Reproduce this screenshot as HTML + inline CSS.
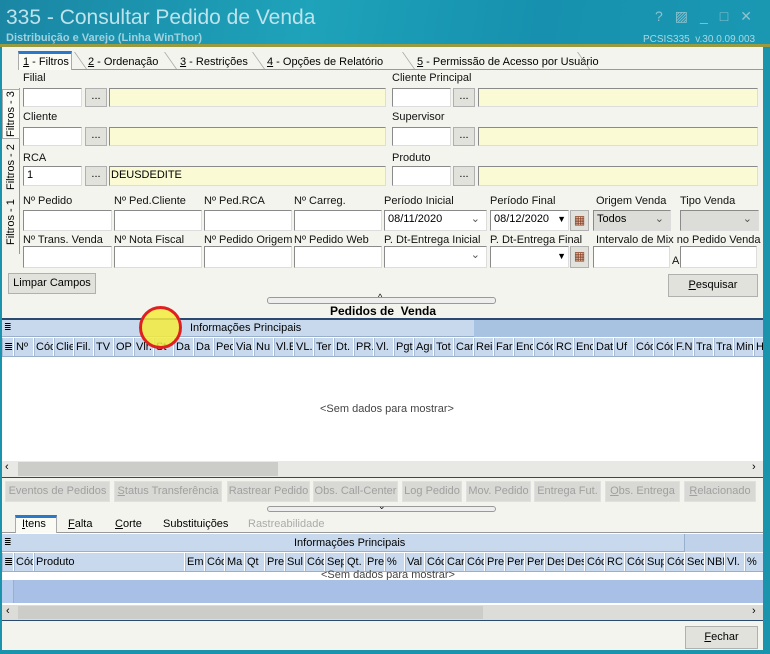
<!DOCTYPE html>
<html><head><meta charset="utf-8"><style>
*{box-sizing:border-box;margin:0;padding:0}
body{width:770px;height:654px;overflow:hidden;background:#1a93ad;font-family:"Liberation Sans",sans-serif;font-size:11px;color:#000;position:relative}
.a{position:absolute}
.lbl{position:absolute;font-size:11px;color:#111;white-space:nowrap}
.in{position:absolute;background:#fff;border:1px solid #8a8a8a;border-right-color:#ddd;border-bottom-color:#ddd;font-size:11px;padding:2px 3px;white-space:nowrap}
.y{background:#fafad4}
.bt{position:absolute;background:#e2e2dc;border:1px solid #b0b0b0;text-align:center;font-size:11px;line-height:18px}
.dis{color:#a0a0a0;background:#d8d8d4;border-color:#e0e0e0}
.gh{position:absolute;background:#c8d9ee;border-bottom:1px solid #98b0cc;display:flex;overflow:hidden;height:19px}
.gh span{flex:0 0 20px;border-right:1px solid #fff;border-left:1px solid #a8bcd6;padding-left:1px;font-size:11px;line-height:18px;overflow:hidden;white-space:nowrap}
.tab{position:absolute;font-size:11px;white-space:nowrap}
.tab u{text-decoration:underline}
.vt{position:absolute;left:3px;width:16px;writing-mode:vertical-rl;transform:rotate(180deg);font-size:11px;white-space:nowrap;text-align:center;line-height:16px}
</style></head><body>
<div class="a" style="left:0;top:0;width:770px;height:46px;background:linear-gradient(100deg,#1a86a4 0%,#1ea3ba 40%,#1690ae 70%,#1a98b2 100%)"></div>
<div class="a" style="left:6px;top:6px;font-size:21px;color:#bde3ec">335 - Consultar Pedido de Venda</div>
<div class="a" style="left:6px;top:32px;font-size:11px;font-weight:bold;color:#9fd2de">Distribuição e Varejo (Linha WinThor)</div>
<div class="a" style="left:655px;top:8px;font-size:14px;color:#8fc2cf;letter-spacing:12px">?▨_□✕</div>
<div class="a" style="left:643px;top:34px;font-size:10px;color:#a8d8e2">PCSIS335&nbsp; v.30.0.09.003</div>
<div class="a" style="left:0;top:44px;width:770px;height:3px;background:#9a9a40"></div>
<div class="a" style="left:2px;top:47px;width:761px;height:603px;background:#f4f4ee"></div>
<div class="a" style="left:18px;top:69px;width:745px;height:1px;background:#999"></div>
<div class="a" style="left:18px;top:51px;width:54px;height:19px;background:#fbfbf6;border:1px solid #aaa;border-bottom:none;border-top:3px solid #2a78c8"></div>
<div class="tab" style="left:23px;top:56px"><u>1</u> - Filtros</div>
<div class="tab" style="left:88px;top:56px"><u>2</u> - Ordenação</div>
<div class="tab" style="left:180px;top:56px"><u>3</u> - Restrições</div>
<div class="tab" style="left:267px;top:56px"><u>4</u> - Opções de Relatório</div>
<div class="tab" style="left:417px;top:56px"><u>5</u> - Permissão de Acesso por Usuário</div>
<div class="a" style="left:80px;top:52px;width:1px;height:17px;background:#aaa;transform:skewX(35deg)"></div>
<div class="a" style="left:170px;top:52px;width:1px;height:17px;background:#aaa;transform:skewX(35deg)"></div>
<div class="a" style="left:258px;top:52px;width:1px;height:17px;background:#aaa;transform:skewX(35deg)"></div>
<div class="a" style="left:408px;top:52px;width:1px;height:17px;background:#aaa;transform:skewX(35deg)"></div>
<div class="a" style="left:583px;top:52px;width:1px;height:17px;background:#aaa;transform:skewX(35deg)"></div>
<div class="a" style="left:2px;top:88px;width:18px;height:166px;border-right:1px solid #999"></div>
<div class="a" style="left:2px;top:89px;width:18px;height:50px;border:1px solid #aaa;background:#fbfbf6"></div>
<div class="vt" style="top:89px;height:50px">Filtros - 3</div>
<div class="vt" style="top:141px;height:52px">Filtros - 2</div>
<div class="vt" style="top:195px;height:55px">Filtros - 1</div>
<div class="lbl" style="left:23px;top:72px">Filial</div>
<div class="in" style="left:23px;top:88px;width:59px;height:19px"></div>
<div class="bt" style="left:85px;top:88px;width:22px;height:19px;line-height:14px">...</div>
<div class="in y" style="left:109px;top:88px;width:277px;height:19px"></div>
<div class="lbl" style="left:392px;top:72px">Cliente Principal</div>
<div class="in" style="left:392px;top:88px;width:59px;height:19px"></div>
<div class="bt" style="left:453px;top:88px;width:22px;height:19px;line-height:14px">...</div>
<div class="in y" style="left:478px;top:88px;width:280px;height:19px"></div>
<div class="lbl" style="left:23px;top:111px">Cliente</div>
<div class="in" style="left:23px;top:127px;width:59px;height:19px"></div>
<div class="bt" style="left:85px;top:127px;width:22px;height:19px;line-height:14px">...</div>
<div class="in y" style="left:109px;top:127px;width:277px;height:19px"></div>
<div class="lbl" style="left:392px;top:111px">Supervisor</div>
<div class="in" style="left:392px;top:127px;width:59px;height:19px"></div>
<div class="bt" style="left:453px;top:127px;width:22px;height:19px;line-height:14px">...</div>
<div class="in y" style="left:478px;top:127px;width:280px;height:19px"></div>
<div class="lbl" style="left:23px;top:152px">RCA</div>
<div class="in" style="left:23px;top:166px;width:59px;height:20px">1</div>
<div class="bt" style="left:85px;top:166px;width:22px;height:20px;line-height:15px">...</div>
<div class="in y" style="left:109px;top:166px;width:277px;height:20px;padding-left:1px">DEUSDEDITE</div>
<div class="lbl" style="left:392px;top:152px">Produto</div>
<div class="in" style="left:392px;top:166px;width:59px;height:20px"></div>
<div class="bt" style="left:453px;top:166px;width:22px;height:20px;line-height:15px">...</div>
<div class="in y" style="left:478px;top:166px;width:280px;height:20px"></div>
<div class="lbl" style="left:23px;top:195px">Nº Pedido</div>
<div class="lbl" style="left:114px;top:195px">Nº Ped.Cliente</div>
<div class="lbl" style="left:204px;top:195px">Nº Ped.RCA</div>
<div class="lbl" style="left:294px;top:195px">Nº Carreg.</div>
<div class="lbl" style="left:384px;top:195px">Período Inicial</div>
<div class="lbl" style="left:490px;top:195px">Período Final</div>
<div class="lbl" style="left:596px;top:195px">Origem Venda</div>
<div class="lbl" style="left:680px;top:195px">Tipo Venda</div>
<div class="in" style="left:23px;top:210px;width:89px;height:21px"></div>
<div class="in" style="left:114px;top:210px;width:88px;height:21px"></div>
<div class="in" style="left:204px;top:210px;width:88px;height:21px"></div>
<div class="in" style="left:294px;top:210px;width:88px;height:21px"></div>
<div class="in" style="left:384px;top:210px;width:103px;height:21px">08/11/2020<span style="position:absolute;right:6px;top:1px;color:#555">⌄</span></div>
<div class="in" style="left:490px;top:210px;width:79px;height:21px">08/12/2020<span style="position:absolute;right:2px;top:3px;font-size:9px">▼</span></div>
<div class="bt" style="left:570px;top:210px;width:19px;height:21px;color:#8b3a1a;font-size:12px">▦</div>
<div class="in" style="left:593px;top:210px;width:78px;height:21px;background:#dcdcd8">Todos<span style="position:absolute;right:6px;top:1px;color:#555">⌄</span></div>
<div class="in" style="left:680px;top:210px;width:79px;height:21px;background:#dcdcd8"><span style="position:absolute;right:6px;top:1px;color:#555">⌄</span></div>
<div class="lbl" style="left:23px;top:234px">Nº Trans. Venda</div>
<div class="lbl" style="left:114px;top:234px">Nº Nota Fiscal</div>
<div class="lbl" style="left:204px;top:234px">Nº Pedido Origem</div>
<div class="lbl" style="left:294px;top:234px">Nº Pedido Web</div>
<div class="lbl" style="left:384px;top:234px">P. Dt-Entrega Inicial</div>
<div class="lbl" style="left:490px;top:234px">P. Dt-Entrega Final</div>
<div class="lbl" style="left:596px;top:234px">Intervalo de Mix no Pedido Venda</div>
<div class="in" style="left:23px;top:246px;width:89px;height:22px"></div>
<div class="in" style="left:114px;top:246px;width:88px;height:22px"></div>
<div class="in" style="left:204px;top:246px;width:88px;height:22px"></div>
<div class="in" style="left:294px;top:246px;width:88px;height:22px"></div>
<div class="in" style="left:384px;top:246px;width:103px;height:22px"><span style="position:absolute;right:6px;top:1px;color:#555">⌄</span></div>
<div class="in" style="left:490px;top:246px;width:79px;height:22px"><span style="position:absolute;right:2px;top:4px;font-size:9px">▼</span></div>
<div class="bt" style="left:570px;top:246px;width:19px;height:22px;color:#8b3a1a;font-size:12px">▦</div>
<div class="in" style="left:593px;top:246px;width:77px;height:22px"></div>
<div class="lbl" style="left:672px;top:255px">A</div>
<div class="in" style="left:680px;top:246px;width:77px;height:22px"></div>
<div class="bt" style="left:8px;top:273px;width:88px;height:21px">Limpar Campos</div>
<div class="bt" style="left:668px;top:274px;width:90px;height:23px;line-height:21px"><u>P</u>esquisar</div>
<div class="a" style="left:267px;top:297px;width:229px;height:7px;border:1px solid #999;border-radius:3px;background:#eee"></div>
<div class="a" style="left:378px;top:292px;font-size:9px">^</div>
<div class="a" style="left:330px;top:304px;font-weight:bold;font-size:12px">Pedidos de&nbsp; Venda</div>
<div class="a" style="left:2px;top:318px;width:761px;height:160px;background:#fff;border-top:2px solid #2b4a70"></div>
<div class="a" style="left:2px;top:320px;width:761px;height:17px;background:#c8d9ee;border-bottom:1px solid #98b0cc"></div>
<div class="a" style="left:474px;top:320px;width:289px;height:17px;background:#a8c2e2"></div>
<div class="a" style="left:4px;top:322px;font-size:9px">≣</div>
<div class="a" style="left:190px;top:322px">Informações Principais</div>
<div class="gh" style="left:2px;top:338px;width:761px"><span style="flex-basis:12px">≣</span><span>Nº</span><span>Cód</span><span>Clie</span><span>Fil.</span><span>TV</span><span>OP</span><span>Vlr.</span><span>St</span><span>Da</span><span>Da</span><span>Pec</span><span>Via</span><span>Nu</span><span>Vl.E</span><span>VL.</span><span>Ter</span><span>Dt.</span><span>PR.</span><span>Vl.</span><span>Pgt</span><span>Agı</span><span>Tot</span><span>Car</span><span>Rei</span><span>Far</span><span>Enc</span><span>Cód</span><span>RC</span><span>Enc</span><span>Dat</span><span>Uf</span><span>Cód</span><span>Cód</span><span>F.N</span><span>Tra</span><span>Tra</span><span>Min</span><span>H</span></div>
<div class="a" style="left:320px;top:403px;color:#444">&lt;Sem dados para mostrar&gt;</div>
<div class="a" style="left:2px;top:461px;width:761px;height:16px;background:#e8e8e4"></div>
<div class="a" style="left:18px;top:462px;width:260px;height:14px;background:#ccccc8"></div>
<div class="a" style="left:5px;top:461px;font-size:11px">‹</div>
<div class="a" style="left:752px;top:461px;font-size:11px">›</div>
<div class="a" style="left:2px;top:477px;width:761px;height:1px;background:#2b4a70"></div>
<div class="bt dis" style="left:5px;top:481px;width:105px;height:21px">Eventos de Pedidos</div>
<div class="bt dis" style="left:114px;top:481px;width:108px;height:21px"><u>S</u>tatus Transferência</div>
<div class="bt dis" style="left:227px;top:481px;width:83px;height:21px">Rastrear Pedido</div>
<div class="bt dis" style="left:313px;top:481px;width:85px;height:21px">Obs. Call-Center</div>
<div class="bt dis" style="left:402px;top:481px;width:60px;height:21px">Log Pedido</div>
<div class="bt dis" style="left:466px;top:481px;width:65px;height:21px">Mov. Pedido</div>
<div class="bt dis" style="left:534px;top:481px;width:67px;height:21px">Entrega Fut.</div>
<div class="bt dis" style="left:605px;top:481px;width:75px;height:21px"><u>O</u>bs. Entrega</div>
<div class="bt dis" style="left:684px;top:481px;width:72px;height:21px"><u>R</u>elacionado</div>
<div class="a" style="left:267px;top:506px;width:229px;height:6px;border:1px solid #999;border-radius:3px;background:#eee"></div>
<div class="a" style="left:378px;top:501px;font-size:9px">⌄</div>
<div class="a" style="left:2px;top:532px;width:761px;height:1px;background:#999"></div>
<div class="a" style="left:15px;top:515px;width:42px;height:18px;background:#fbfbf6;border:1px solid #aaa;border-bottom:none;border-top:3px solid #2a78c8"></div>
<div class="tab" style="left:22px;top:518px"><u>I</u>tens</div>
<div class="tab" style="left:68px;top:518px"><u>F</u>alta</div>
<div class="tab" style="left:115px;top:518px"><u>C</u>orte</div>
<div class="tab" style="left:163px;top:518px">Substituições</div>
<div class="tab" style="left:248px;top:518px;color:#aaa">Rastreabilidade</div>
<div class="a" style="left:2px;top:533px;width:761px;height:88px;background:#fff;border-bottom:1px solid #2b4a70"></div>
<div class="a" style="left:2px;top:534px;width:761px;height:18px;background:#c8d9ee;border-bottom:1px solid #98b0cc"></div>
<div class="a" style="left:684px;top:534px;width:79px;height:18px;background:#c0d2ea;border-left:1px solid #98b0cc"></div>
<div class="a" style="left:4px;top:537px;font-size:9px">≣</div>
<div class="a" style="left:294px;top:537px">Informações Principais</div>
<div class="gh" style="left:2px;top:553px;width:761px"><span style="flex-basis:12px">≣</span><span>Cód</span><span style="flex-basis:151px">Produto</span><span>Em</span><span>Cód</span><span>Ma</span><span>Qt</span><span>Pre</span><span>Sul</span><span>Cód</span><span>Sep</span><span>Qt.</span><span>Pre</span><span>%</span><span>Val</span><span>Cód</span><span>Car</span><span>Cód</span><span>Pre</span><span>Per</span><span>Per</span><span>Des</span><span>Des</span><span>Cód</span><span>RC</span><span>Cód</span><span>Sup</span><span>Cód</span><span>Sec</span><span>NBI</span><span>Vl.</span><span>%</span></div>
<div class="a" style="left:321px;top:569px;color:#444">&lt;Sem dados para mostrar&gt;</div>
<div class="a" style="left:2px;top:580px;width:761px;height:23px;background:#a8c0e6"></div>
<div class="a" style="left:2px;top:580px;width:12px;height:23px;background:#b8cdee;border-right:1px solid #98b0cc"></div>
<div class="a" style="left:2px;top:605px;width:761px;height:15px;background:#dcdcd8"></div>
<div class="a" style="left:18px;top:606px;width:465px;height:13px;background:#ccccc8"></div>
<div class="a" style="left:6px;top:605px">‹</div>
<div class="a" style="left:752px;top:605px">›</div>
<div class="bt" style="left:685px;top:626px;width:73px;height:23px;line-height:21px"><u>F</u>echar</div>
<div class="a" style="left:139px;top:306px;width:43px;height:43px;border-radius:50%;background:rgba(245,235,60,0.85);border:3px solid #e02020"></div>
</body></html>
